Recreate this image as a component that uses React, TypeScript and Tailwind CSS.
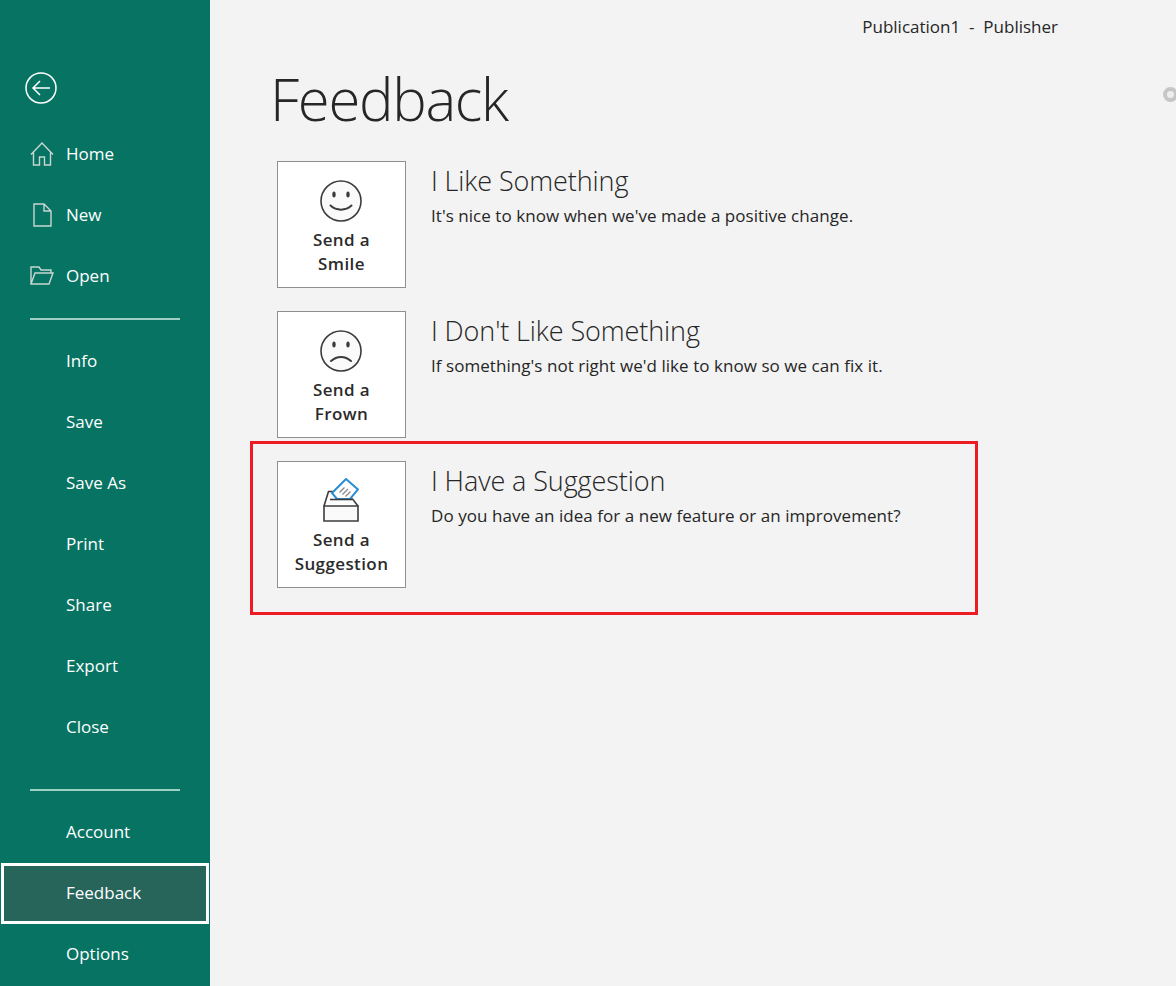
const FONT = "font-['Open_Sans','Noto_Sans',sans-serif]"

function BackIcon() {
  return (
    <svg width="32" height="32" viewBox="0 0 32 32" fill="none" stroke="white" strokeWidth="1.5">
      <circle cx="16" cy="16" r="15" />
      <path d="M25 16H8M15 9l-7 7 7 7" />
    </svg>
  )
}

function HomeIcon() {
  return (
    <svg width="24" height="24" viewBox="0 0 24 24" fill="none" stroke="#c9d6d2" strokeWidth="1.4">
      <path d="M1 12.500 12 1l11 11.500M3.500 10.500V23h6v-8h5v8h6V10.500" />
    </svg>
  )
}

function NewIcon() {
  return (
    <svg width="20" height="24" viewBox="0 0 20 24" fill="none" stroke="#c9d6d2" strokeWidth="1.4">
      <path d="M2 1v22h17V8l-7-7zM12 1v7h7" />
    </svg>
  )
}

function OpenIcon() {
  return (
    <svg width="24" height="20" viewBox="0 0 24 20" fill="none" stroke="#c9d6d2" strokeWidth="1.4">
      <path d="M1 18V1h8l2 3h10v3M1 18l4-11h18l-4 11z" />
    </svg>
  )
}

function FaceIcon({ mouth }: { mouth: string }) {
  return (
    <svg width="42" height="42" viewBox="0 0 42 42" fill="none" stroke="#3c3c3c" strokeWidth="1.6">
      <circle cx="21" cy="21" r="20" fill="#fafafa" />
      <ellipse cx="14" cy="14.500" rx="1.700" ry="3" fill="#3c3c3c" stroke="none" />
      <ellipse cx="28" cy="14.500" rx="1.700" ry="3" fill="#3c3c3c" stroke="none" />
      <path d={mouth} strokeWidth="2" strokeLinecap="round" />
    </svg>
  )
}

function SuggestionIcon() {
  return (
    <svg width="36" height="44" viewBox="0 0 36 44" fill="none">
      <path d="M1 28 5.500 13.500H10M28 21h1.500L35 28" stroke="#3c3c3c" strokeWidth="1.600" />
      <path d="M1 28h34v15H1z" stroke="#3c3c3c" strokeWidth="1.600" fill="#fafafa" />
      <path d="M9 15 23 1l12 10.500L27 21H14z" fill="white" stroke="#2a8dd4" strokeWidth="2" />
      <path d="M7 21.500h22" stroke="#3c3c3c" strokeWidth="1.600" />
      <path d="M16.500 14.500l5-5M19.500 16.500l5.500-5.500M22.500 18.500l5-5" stroke="#8a8a8a" strokeWidth="1.400" />
    </svg>
  )
}

function NavItem({ label, icon }: { label: string; icon?: React.ReactNode }) {
  return (
    <div className="flex h-[61px] items-center pb-[2px] text-[17px] text-white">
      <div className="flex w-[66px] justify-center pl-[17px]">{icon}</div>
      <span>{label}</span>
    </div>
  )
}

function FeedbackRow({
  title,
  text,
  line1,
  line2,
  icon,
}: {
  title: string
  text: string
  line1: string
  line2: string
  icon: React.ReactNode
}) {
  return (
    <div className="flex h-[127px]">
      <div className="flex h-[127px] w-[129px] shrink-0 flex-col items-center border border-[#8f8f8f] bg-white">
        <div className="mr-[2px] flex h-[66px] items-end pb-[6px]">{icon}</div>
        <div className="text-center text-[17px] leading-[24px] font-semibold tracking-[0.4px] text-[#2b2b2b]">
          {line1}
          <br />
          {line2}
        </div>
      </div>
      <div className="pl-[25px]">
        <div className="pt-[1px] text-[27px] leading-[38px] font-light tracking-[-0.1px] text-[#262626]">{title}</div>
        <div className="mt-[5px] text-[17px] leading-[22px] tracking-[0.05px] text-[#262626]">{text}</div>
      </div>
    </div>
  )
}

export default function App() {
  return (
    <div className={`flex h-[986px] w-[1176px] overflow-hidden bg-[#f3f3f3] ${FONT}`}>
      {/* Backstage nav */}
      <aside className="flex w-[210px] shrink-0 flex-col bg-[#077363]">
        <div className="flex h-[124px] items-start pt-[72px] pl-[25px]">
          <BackIcon />
        </div>
        <NavItem label="Home" icon={<HomeIcon />} />
        <NavItem label="New" icon={<NewIcon />} />
        <NavItem label="Open" icon={<OpenIcon />} />
        <div className="mx-[30px] my-[11px] h-[2px] bg-[#9fcec5]" />
        <NavItem label="Info" />
        <NavItem label="Save" />
        <NavItem label="Save As" />
        <NavItem label="Print" />
        <NavItem label="Share" />
        <NavItem label="Export" />
        <NavItem label="Close" />
        <div className="mx-[30px] mt-[31px] mb-[11px] h-[2px] bg-[#9fcec5]" />
        <NavItem label="Account" />
        <div className="mx-[1px] flex h-[61px] items-center border-[3px] border-white bg-[#27655b] pb-[2px] pl-[62px] text-[17px] text-white">
          Feedback
        </div>
        <NavItem label="Options" />
      </aside>

      {/* Content */}
      <main className="relative flex-1">
        <div className="flex justify-end pt-[14px] pr-[118px] text-[17px] leading-[26px] text-[#262626]">
          Publication1&nbsp; -&nbsp; Publisher
        </div>
        <h1 className="mt-[17px] pl-[60px] text-[58px] leading-[84px] font-light tracking-[-1.3px] text-[#262626]">
          Feedback
        </h1>
        <div className="mt-[20px] flex flex-col gap-[23px] pl-[67px]">
          <FeedbackRow
            title="I Like Something"
            text="It's nice to know when we've made a positive change."
            line1="Send a"
            line2="Smile"
            icon={<FaceIcon mouth="M10.500 25.500c6 5.500 15 5.500 21 0" />}
          />
          <FeedbackRow
            title="I Don't Like Something"
            text="If something's not right we'd like to know so we can fix it."
            line1="Send a"
            line2="Frown"
            icon={<FaceIcon mouth="M11 31c6-5.500 14-5.500 20 0" />}
          />
          <FeedbackRow
            title="I Have a Suggestion"
            text="Do you have an idea for a new feature or an improvement?"
            line1="Send a"
            line2="Suggestion"
            icon={<SuggestionIcon />}
          />
        </div>
        {/* red callout and stray scroll dot sit over the content */}
        <div className="absolute top-[441px] left-[40px] h-[174px] w-[728px] border-[3px] border-[#ed1c24]" />
        <div className="absolute top-[87px] left-[953px] h-[15px] w-[15px] rounded-full border-[4px] border-[#c6c6c6] bg-[#eeeeee]" />
      </main>
    </div>
  )
}
